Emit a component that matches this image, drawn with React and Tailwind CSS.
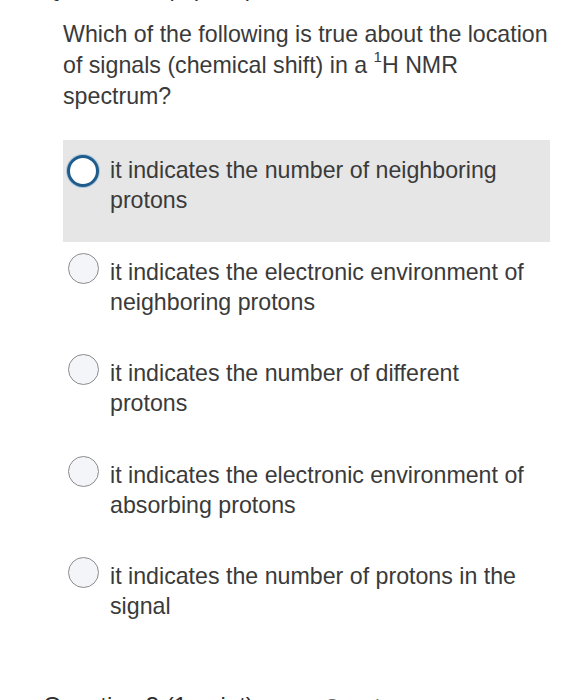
import React from "react";

const options = [
  { text: "it indicates the number of neighboring protons", selected: true },
  { text: "it indicates the electronic environment of neighboring protons" },
  { text: "it indicates the number of different protons" },
  { text: "it indicates the electronic environment of absorbing protons" },
  { text: "it indicates the number of protons in the signal" },
];

function Header({ n, className }) {
  return (
    <div className={"flex items-center pl-[43px] h-[30px] leading-[30px] " + className}>
      <span className="text-[24px] text-[#2f2f2f]">Question {n} (1 point)</span>
      <span className="ml-[48px] flex items-center text-[19px] text-[#6b6b6b]">
        <svg width="16" height="16" viewBox="0 0 16 16" className="mr-[8px]">
          <path d="M2.5 8.5 L6 12 L13.5 3.5" fill="none" stroke="#8a8a8a" strokeWidth="2.2" strokeLinecap="round" strokeLinejoin="round" />
        </svg>
        Saved
      </span>
    </div>
  );
}

export default function App() {
  return (
    <div className="w-[585px] h-[700px] overflow-hidden bg-white font-['Liberation_Sans',Arial,sans-serif] text-[#3a3a3a]">
      <Header n={2} className="mt-[-27px]" />
      <div className="pl-[63px] pr-[35px] pt-[15.5px]">
        <p className="text-[23.2px] leading-[31px]">
          Which of the following is true about the location of signals (chemical shift) in a{" "}
          <sup className="text-[15px] top-[-0.7em]">1</sup>H NMR spectrum?
        </p>
        <div className="mt-[28.5px] flex flex-col">
          {options.map((o, i) => (
            <div
              key={i}
              className={
                "flex items-start h-[101.5px] pt-[15px] pl-[4px] pr-[16px] " +
                (o.selected ? "bg-[#e6e6e6]" : "")
              }
            >
              {o.selected ? (
                <span className="shrink-0 w-[32px] h-[32px] rounded-full border-[3px] border-[#1f5c8b] bg-white shadow-[0_0_0_1px_rgba(120,170,210,0.5)]" />
              ) : (
                <span className="shrink-0 mt-[-4px] ml-[0.5px] mr-[0.5px] w-[31px] h-[31px] rounded-full border border-[#8c8c8c] bg-[#f4f5f9]" />
              )}
              <span className="ml-[11px] text-[23.2px] leading-[30px]">{o.text}</span>
            </div>
          ))}
        </div>
      </div>
      <Header n={3} className="mt-[43px]" />
    </div>
  );
}
